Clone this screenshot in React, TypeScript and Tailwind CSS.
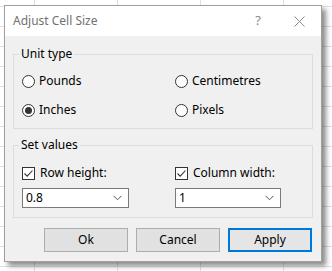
import React from "react";

const font = { fontFamily: '"Noto Sans", "Liberation Sans", sans-serif' };

function Radio({ label, checked }: { label: string; checked?: boolean }) {
  return (
    <label className="flex h-5 items-center gap-[4px] text-[12px] text-black">
      <span className="flex h-[13px] w-[13px] items-center justify-center rounded-full border border-[#333] bg-white">
        {checked && <span className="h-[7px] w-[7px] rounded-full bg-[#333]" />}
      </span>
      {label}
    </label>
  );
}

function Check({ label }: { label: string }) {
  return (
    <label className="flex h-4 items-center gap-[5px] text-[12px] text-black">
      <span className="flex h-[13px] w-[13px] items-center justify-center border border-[#333] bg-white">
        <svg width="11" height="11" viewBox="0 0 11 11" fill="none">
          <path d="M1.5 5.5 L4.2 8.2 L9.5 2.5" stroke="#333" strokeWidth="1.1" />
        </svg>
      </span>
      {label}
    </label>
  );
}

function Select({ value, width }: { value: string; width: string }) {
  return (
    <div className={`flex h-5 items-center justify-between border border-[#7a7a7a] bg-white pl-[3px] pr-[6px] text-[12px] text-black ${width}`}>
      <span>{value}</span>
      <svg width="9" height="6" viewBox="0 0 9 6" fill="none">
        <path d="M0.5 0.8 L4.5 4.8 L8.5 0.8" stroke="#555" strokeWidth="1" />
      </svg>
    </div>
  );
}

export default function App() {
  return (
    <div
      style={font}
      className="h-[271px] w-[332px] overflow-hidden bg-white bg-[linear-gradient(to_right,#e0e0e0_1px,transparent_1px),linear-gradient(to_bottom,#e0e0e0_1px,transparent_1px)] bg-[size:83px_20px] bg-[position:34px_6px] pl-[4px] pt-[5px]"
    >
      <div className="flex h-[257px] w-[318px] flex-col border border-[#a0a0a0] bg-[#f0f0f0] shadow-[4px_4px_5px_rgba(0,0,0,0.45)]">
        <div className="flex h-[30px] items-center bg-white pl-[8px] text-[12px] text-[#707070]">
          <span className="flex-1">Adjust Cell Size</span>
          <span className="w-[16px] text-center text-[13px] text-[#8a8a8a]">?</span>
          <svg className="ml-[28px] mr-[16px]" width="11" height="11" viewBox="0 0 11 11" fill="none">
            <path d="M0.5 0.5 L10.5 10.5 M10.5 0.5 L0.5 10.5" stroke="#8a8a8a" strokeWidth="1" />
          </svg>
        </div>

        <div className="flex flex-col px-[8px] pt-[10px]">
          <fieldset className="border border-[#dcdcdc] px-[8px] pb-[8px] pt-[9px]">
            <legend className="-ml-[3px] px-[2px] text-[12px] leading-4 text-black">Unit type</legend>
            <div className="grid grid-cols-[153px_1fr] gap-y-[9px]">
              <Radio label="Pounds" />
              <Radio label="Centimetres" />
              <Radio label="Inches" checked />
              <Radio label="Pixels" />
            </div>
          </fieldset>

          <fieldset className="mt-[8px] border border-[#dcdcdc] px-[8px] pb-[9px] pt-[12px]">
            <legend className="-ml-[3px] px-[2px] text-[12px] leading-4 text-black">Set values</legend>
            <div className="grid grid-cols-[153px_1fr] gap-y-[7px]">
              <Check label="Row height:" />
              <Check label="Column width:" />
              <Select value="0.8" width="w-[107px]" />
              <Select value="1" width="w-[106px]" />
            </div>
          </fieldset>
        </div>

        <div className="mt-[10px] flex justify-end gap-[8px] pr-[9px] text-[12px] text-black">
          <button className="h-[24px] w-[84px] border border-[#adadad] bg-[#e1e1e1]">Ok</button>
          <button className="h-[24px] w-[84px] border border-[#adadad] bg-[#e1e1e1]">Cancel</button>
          <button className="h-[24px] w-[84px] border-2 border-[#0078d7] bg-[#e5e5e5]">Apply</button>
        </div>
      </div>
    </div>
  );
}
